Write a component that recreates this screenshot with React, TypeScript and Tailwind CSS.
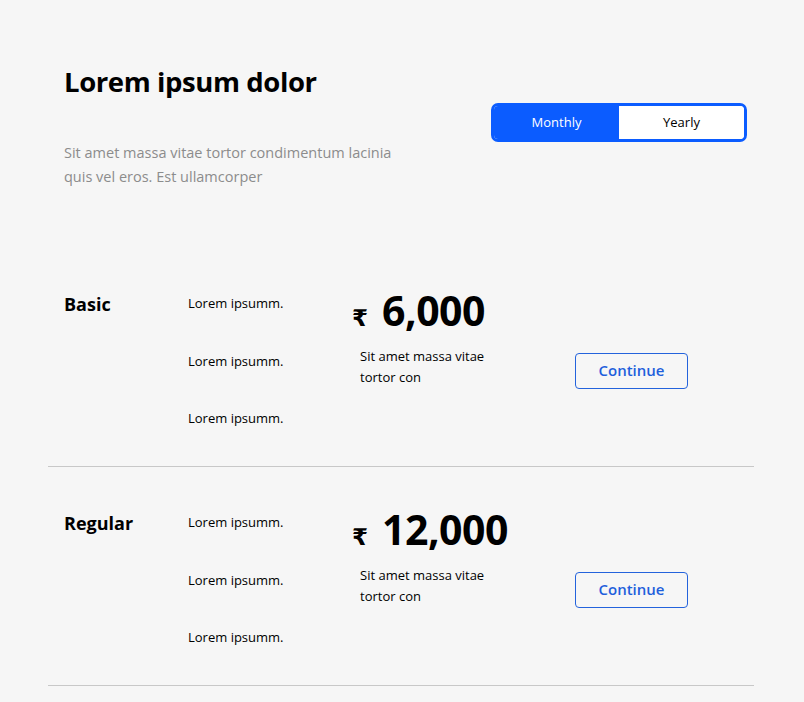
import { useState } from 'react'

type Plan = { name: string; price: string; features: string[] }

const plans: Plan[] = [
  { name: 'Basic', price: '6,000', features: ['Lorem ipsumm.', 'Lorem ipsumm.', 'Lorem ipsumm.'] },
  { name: 'Regular', price: '12,000', features: ['Lorem ipsumm.', 'Lorem ipsumm.', 'Lorem ipsumm.'] },
]

export default function App() {
  const [period, setPeriod] = useState<'monthly' | 'yearly'>('monthly')

  return (
    <div className="min-h-[702px] bg-[#f6f6f6] text-black font-['Open_Sans','Lato',sans-serif]">
      <div className="ml-[48px] w-[706px] pt-[64px]">
        {/* header */}
        <div className="flex justify-between pl-[16px] pr-[7px]">
          <div>
            <h1 className="text-[27.5px] leading-[36px] font-bold tracking-[-0.4px]">Lorem ipsum dolor</h1>
            <p className="mt-[41px] w-[345px] text-[14.5px] leading-[24px] text-[#8c8c8c]">
              Sit amet massa vitae tortor condimentum lacinia quis vel eros. Est ullamcorper
            </p>
          </div>
          <div className="mt-[39px] flex h-[39px] w-[256px] overflow-hidden rounded-[7px] border-[3px] border-[#0b5cff] bg-white">
            <button
              onClick={() => setPeriod('monthly')}
              className={
                'flex-1 text-[13px] ' +
                (period === 'monthly' ? 'bg-[#0b5cff] text-white' : 'bg-white text-black')
              }
            >
              Monthly
            </button>
            <button
              onClick={() => setPeriod('yearly')}
              className={
                'flex-1 text-[13px] ' +
                (period === 'yearly' ? 'bg-[#0b5cff] text-white' : 'bg-white text-black')
              }
            >
              Yearly
            </button>
          </div>
        </div>

        {/* plans */}
        <div className="mt-[59px]">
          {plans.map((p) => (
            <div key={p.name} className="flex border-b border-[#c8c8c8] pl-[16px] pt-[44px] pb-[38px]">
              <div className="w-[124px] text-[18px] leading-[24px] font-bold">{p.name}</div>
              <div className="flex w-[164px] flex-col gap-[37.5px] pt-[1px]">
                {p.features.map((f, i) => (
                  <div key={i} className="text-[13px] leading-[20px]">{f}</div>
                ))}
              </div>
              <div className="flex-1">
                <div className="-mt-[4px] flex items-baseline gap-[14px]">
                  <span className="text-[23px] font-bold font-['DejaVu_Sans',sans-serif]">₹</span>
                  <span className="text-[41px] leading-[44px] font-bold tracking-[-0.5px]">{p.price}</span>
                </div>
                <div className="mt-[10px] flex items-start">
                  <p className="ml-[8px] w-[215px] text-[13px] leading-[21px]">
                    Sit amet massa vitae<br />tortor con
                  </p>
                  <button className="mt-[7px] h-[36px] w-[113px] rounded-[4px] border border-[#2463dc] text-[15px] font-semibold text-[#1f5fdc]">
                    Continue
                  </button>
                </div>
              </div>
            </div>
          ))}
        </div>
      </div>
    </div>
  )
}
